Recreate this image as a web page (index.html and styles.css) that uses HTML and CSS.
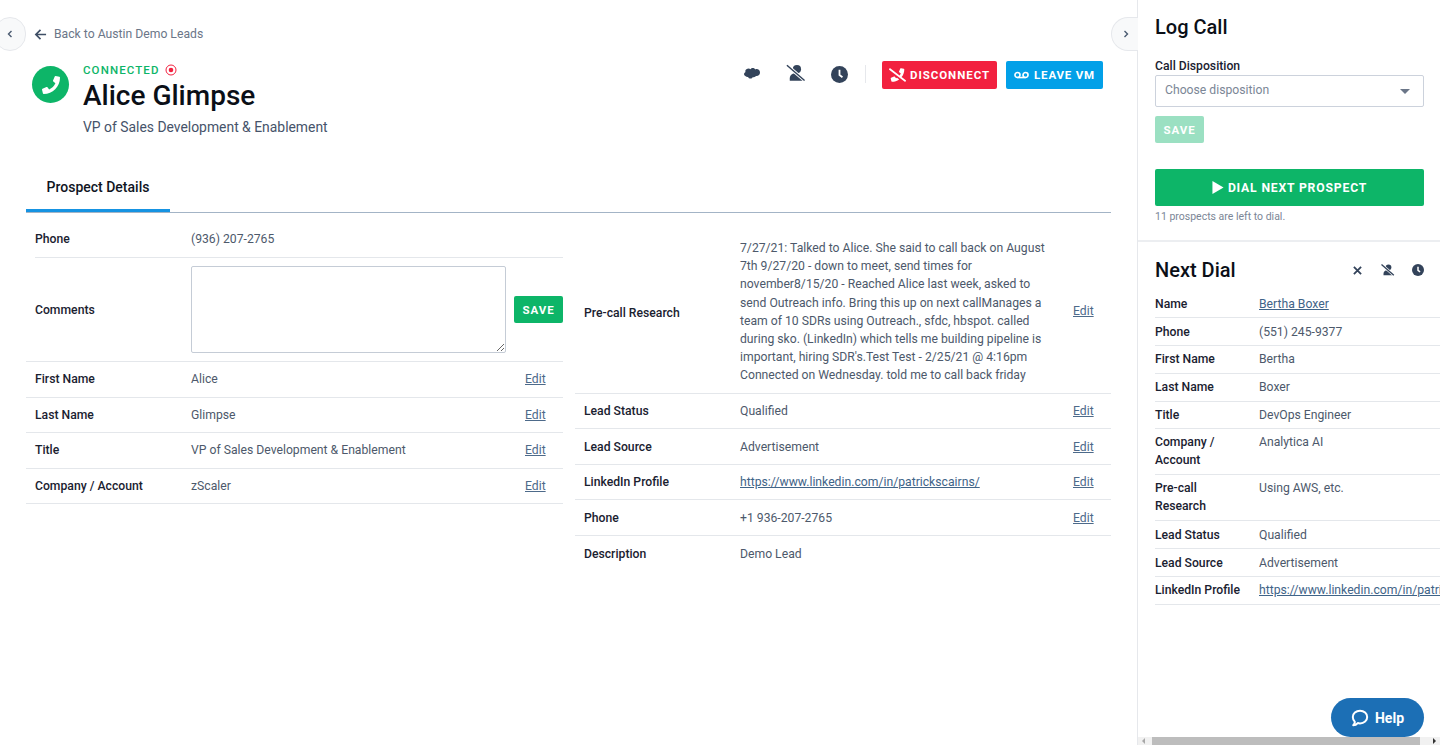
FILE: index.html
```html
<!DOCTYPE html>
<html lang="en">
<head>
<meta charset="utf-8">
<title>Alice Glimpse</title>
<link rel="stylesheet" href="styles.css">
</head>
<body>
<div class="app">
  <main class="main">
    <button class="toggle toggle-left"><svg viewBox="0 0 10 10" width="10" height="10"><path d="M6.5 2 3.5 5l3 3" fill="none" stroke="#4a5a70" stroke-width="1.4"/></svg></button>
    <button class="toggle toggle-right"><svg viewBox="0 0 10 10" width="10" height="10"><path d="M3.5 2l3 3-3 3" fill="none" stroke="#4a5a70" stroke-width="1.4"/></svg></button>
    <a class="back"><svg viewBox="0 0 14 14" width="13" height="13"><path d="M13 7H2.5M7 2 2 7l5 5" fill="none" stroke="#3f4f66" stroke-width="1.8"/></svg><span>Back to Austin Demo Leads</span></a>
    <header class="head">
      <div class="who">
        <span class="avatar"><svg viewBox="0 0 512 512" width="18" height="18"><path fill="#fff" d="M493.4 24.6l-104-24c-11.3-2.6-22.9 3.3-27.5 13.9l-48 112c-4.2 9.8-1.4 21.3 6.9 28l60.6 49.6c-36 76.7-98.9 140.5-177.2 177.2l-49.6-60.6c-6.8-8.3-18.2-11.1-28-6.9l-112 48C3.9 366.5-2 378.1.6 389.4l24 104C27.1 504.2 36.7 512 48 512c256.1 0 464-207.5 464-464 0-11.2-7.7-20.9-18.6-23.4z"/></svg></span>
        <div class="who-text">
          <div class="status">CONNECTED <svg viewBox="0 0 12 12" width="12" height="12"><circle cx="6" cy="6" r="5" fill="none" stroke="#f2213f" stroke-width="1"/><circle cx="6" cy="6" r="2.3" fill="#f2213f"/></svg></div>
          <h1>Alice Glimpse</h1>
          <div class="role">VP of Sales Development &amp; Enablement</div>
        </div>
      </div>
      <div class="actions">
        <svg class="cloud" viewBox="0 0 16 11" width="16" height="11"><path fill="#33435a" d="M6.5 1.2C7 .5 7.9 0 8.8 0c1.100 0 2 .6 2.500 1.400.4-.2.9-.3 1.300-.3C14.500 1.100 16 2.600 16 4.600s-1.500 3.500-3.400 3.500h-.7c-.4.700-1.200 1.200-2 1.200-.4 0-.8-.1-1.100-.3-.4 1-1.300 1.600-2.300 1.600-1.100 0-2-.7-2.400-1.600-.2 0-.3.100-.5.100C2.200 8.800 0 7.600 0 6.200c0-.9.700-1.800 1.500-2.200-.1-.3-.2-.6-.2-1C1.300 1.700 3.200.6 4.500.6c.8 0 1.500.2 2 .6z"/></svg>
        <svg class="ico-user" viewBox="0 0 22 18" width="21" height="18"><circle cx="12.5" cy="5" r="4.3" fill="#33435a"/><path fill="#33435a" d="M5 17v-2.500C5 11.500 7.500 9.500 10 9.500h1L19 15.800V17z"/><path d="M2 .8l18.500 16" stroke="#fff" stroke-width="3.400"/><path d="M2 .8l18.500 16" stroke="#33435a" stroke-width="1.500"/></svg>
        <svg class="ico-clock" viewBox="0 0 16 16" width="17" height="17"><circle cx="8" cy="8" r="8" fill="#33435a"/><path d="M8 3.500V8.500l2.800 2" fill="none" stroke="#fff" stroke-width="1.700"/></svg>
        <span class="sep"></span>
        <button class="btn btn-red"><svg viewBox="0 0 640 512" width="17" height="14"><path fill="#fff" d="M268.200 381.400l-49.600-60.600c-6.800-8.300-18.200-11.100-28-6.900l-112 48c-10.700 4.600-16.500 16.100-13.900 27.500l24 104c2.500 10.800 12.100 18.600 23.400 18.600 100.700 0 193.700-32.400 269.700-86.900l-80-61.800c-10.900 6.900-21.600 13.200-33.600 17.900zm365.600 76.700L475.100 335.500C537.900 256.500 576 156.900 576 48c0-11.200-7.700-20.900-18.600-23.400l-104-24c-11.300-2.600-22.900 3.300-27.500 13.900l-48 112c-4.200 9.800-1.400 21.300 6.900 28l60.600 49.600c-12.200 26.100-27.900 50.300-46 72.800L45.500 3.400C38.500-2 28.500-.8 23 6.200L3.400 31.500c-5.400 7-4.200 17 2.800 22.400l588.400 454.700c7 5.400 17 4.200 22.500-2.800l19.600-25.300c5.400-6.800 4.100-16.900-2.900-22.300z"/></svg>DISCONNECT</button>
        <button class="btn btn-blue"><svg viewBox="0 0 16 8" width="15" height="8"><circle cx="3.700" cy="4" r="2.700" fill="none" stroke="#fff" stroke-width="1.700"/><circle cx="12.300" cy="4" r="2.700" fill="none" stroke="#fff" stroke-width="1.700"/><path d="M3.700 6.700h8.600" stroke="#fff" stroke-width="1.700"/></svg>LEAVE VM</button>
      </div>
    </header>
    <nav class="tabs"><a class="tab">Prospect Details</a></nav>
    <section class="details">
      <div class="col">
        <div class="row row-inset row-phone"><span class="k">Phone</span><span class="v">(936) 207-2765</span></div>
        <div class="row row-comments"><span class="k">Comments</span><textarea class="comment" aria-label="Comments"></textarea><button class="btn btn-green">SAVE</button></div>
        <div class="row"><span class="k">First Name</span><span class="v">Alice</span><a class="edit">Edit</a></div>
        <div class="row"><span class="k">Last Name</span><span class="v">Glimpse</span><a class="edit">Edit</a></div>
        <div class="row"><span class="k">Title</span><span class="v">VP of Sales Development &amp; Enablement</span><a class="edit">Edit</a></div>
        <div class="row"><span class="k">Company / Account</span><span class="v">zScaler</span><a class="edit">Edit</a></div>
      </div>
      <div class="col col-right">
        <div class="row row-research"><span class="k">Pre-call Research</span><span class="v">7/27/21: Talked to Alice. She said to call back on August 7th 9/27/20 - down to meet, send times for november8/15/20 - Reached Alice last week, asked to send Outreach info. Bring this up on next callManages a team of 10 SDRs using Outreach., sfdc, hbspot. called during sko. (LinkedIn) which tells me building pipeline is important, hiring SDR's.Test Test - 2/25/21 @ 4:16pm Connected on Wednesday. told me to call back friday</span><a class="edit">Edit</a></div>
        <div class="row"><span class="k">Lead Status</span><span class="v">Qualified</span><a class="edit">Edit</a></div>
        <div class="row"><span class="k">Lead Source</span><span class="v">Advertisement</span><a class="edit">Edit</a></div>
        <div class="row"><span class="k">LinkedIn Profile</span><span class="v"><a class="link">https://www.linkedin.com/in/patrickscairns/</a></span><a class="edit">Edit</a></div>
        <div class="row"><span class="k">Phone</span><span class="v">+1 936-207-2765</span><a class="edit">Edit</a></div>
        <div class="row row-last"><span class="k">Description</span><span class="v">Demo Lead</span></div>
      </div>
    </section>
  </main>
  <aside class="side">
    <section class="log">
      <h2>Log Call</h2>
      <label class="field-label">Call Disposition</label>
      <div class="select"><span class="placeholder">Choose disposition</span><i class="caret"></i></div>
      <button class="btn btn-save">SAVE</button>
      <button class="btn btn-dial"><svg viewBox="0 0 12 14" width="12" height="13"><path d="M0 0l12 7-12 7z" fill="#fff"/></svg>DIAL NEXT PROSPECT</button>
      <p class="left">11 prospects are left to dial.</p>
    </section>
    <section class="next">
      <div class="next-head">
        <h2>Next Dial</h2>
        <div class="next-icons">
          <svg viewBox="0 0 10 10" width="9" height="9"><path d="M1 1l8 8M9 1 1 9" stroke="#33435a" stroke-width="2"/></svg>
          <svg viewBox="0 0 22 18" width="15" height="12"><circle cx="12.5" cy="5" r="4.3" fill="#33435a"/><path fill="#33435a" d="M5 17v-2.500C5 11.500 7.500 9.500 10 9.500h1L19 15.800V17z"/><path d="M2 .8l18.500 16" stroke="#fff" stroke-width="4"/><path d="M2 .8l18.500 16" stroke="#33435a" stroke-width="2"/></svg>
          <svg viewBox="0 0 16 16" width="12" height="12"><circle cx="8" cy="8" r="8" fill="#33435a"/><path d="M8 3.500V8.500l2.800 2" fill="none" stroke="#fff" stroke-width="2"/></svg>
        </div>
      </div>
      <div class="srow"><span class="sk">Name</span><span class="sv"><a class="link">Bertha Boxer</a></span></div>
      <div class="srow"><span class="sk">Phone</span><span class="sv">(551) 245-9377</span></div>
      <div class="srow"><span class="sk">First Name</span><span class="sv">Bertha</span></div>
      <div class="srow"><span class="sk">Last Name</span><span class="sv">Boxer</span></div>
      <div class="srow"><span class="sk">Title</span><span class="sv">DevOps Engineer</span></div>
      <div class="srow srow-tall"><span class="sk">Company / Account</span><span class="sv">Analytica AI</span></div>
      <div class="srow srow-tall"><span class="sk">Pre-call Research</span><span class="sv">Using AWS, etc.</span></div>
      <div class="srow"><span class="sk">Lead Status</span><span class="sv">Qualified</span></div>
      <div class="srow"><span class="sk">Lead Source</span><span class="sv">Advertisement</span></div>
      <div class="srow"><span class="sk">LinkedIn Profile</span><span class="sv"><a class="link">https://www.linkedin.com/in/patrickscairns/</a></span></div>
    </section>
    <div class="scrollbar">
      <i class="arr arr-l"></i><i class="thumb"></i><i class="arr arr-r"></i>
    </div>
  </aside>
</div>
<button class="help"><svg viewBox="0 0 20 20" width="18" height="18"><path d="M10 2c4.500 0 8 3 8 7s-3.500 7-8 7c-.9 0-1.700-.1-2.500-.4C6.500 16.800 4.800 18 2.500 18c1-1 1.700-2.300 1.800-3.700C2.900 13 2 11.100 2 9c0-4 3.500-7 8-7z" fill="none" stroke="#fff" stroke-width="2.200" stroke-linejoin="round"/></svg>Help</button>
</body>
</html>
```
FILE: styles.css
```css
* { box-sizing: border-box; }
html, body { margin: 0; height: 745px; overflow: hidden; }
body { font-family: Roboto, "Liberation Sans", sans-serif; font-size: 12.2px; color: #4a5568; background: #fff; }
button { font-family: inherit; border: 0; padding: 0; }
h1, h2, p { margin: 0; }
.app { display: flex; height: 745px; }
.main { position: relative; width: 1138px; flex: none; padding: 26px 26px 0; border-right: 1px solid #e6e8ec; }
.toggle { position: absolute; top: 17px; width: 32px; height: 34px; border: 1px solid #e6e8ec; background: #f8f9fa; border-radius: 17px; display: flex; align-items: center; }
.toggle-left { left: -6px; padding-left: 10px; }
.toggle-right { right: -1px; width: 27px; border-right: 0; border-radius: 17px 0 0 17px; padding-left: 9px; }
.back { display: flex; align-items: center; gap: 7px; padding-left: 8px; height: 16px; color: #6b7688; }
.head { display: flex; justify-content: space-between; margin-top: 20px; padding: 0 8px 0 6px; height: 90px; }
.who { display: flex; gap: 14px; }
.avatar { width: 37px; height: 37px; margin-top: 4px; border-radius: 50%; background: #0db568; display: flex; align-items: center; justify-content: center; }
.status { display: flex; align-items: center; gap: 5px; height: 16px; color: #0db568; font-size: 11.5px; font-weight: 500; letter-spacing: 1.1px; }
.who h1 { font-size: 28px; line-height: 34px; font-weight: 500; color: #0b0f17; margin-top: 1px; }
.role { font-size: 13.9px; line-height: 20px; color: #46536a; margin-top: 4px; }
.actions { display: flex; align-items: flex-start; margin-top: -1px; }
.cloud { margin: 7px 25px 0 0; }
.ico-user { margin: 3px 25px 0 0; }
.ico-clock { margin: 5px 17px 0 0; }
.sep { width: 1px; height: 18px; margin: 4px 16px 0 0; background: #e6e8ec; }
.btn { display: inline-flex; align-items: center; justify-content: center; border-radius: 2px; color: #fff; font-size: 11.5px; font-weight: 700; letter-spacing: .95px; }
.btn-red { width: 115px; height: 28px; gap: 4px; background: #f2213f; margin-right: 9px; }
.btn-blue { width: 97px; height: 28px; gap: 5px; background: #02a0e8; letter-spacing: .8px; }
.tabs { height: 54px; margin-top: 7px; border-bottom: 1px solid #a3b4c6; }
.tab { display: flex; align-items: center; justify-content: center; width: 144px; height: 53px; padding-top: 6px; border-bottom: 3px solid #1693e2; color: #10151f; font-size: 14px; font-weight: 500; }
.details { display: flex; gap: 12px; }
.col { width: 537px; flex: none; padding-top: 8px; }
.col-right { width: 536px; padding-top: 17px; }
.row { display: flex; align-items: center; min-height: 35.6px; padding-left: 9px; border-bottom: 1px solid #e4e7eb; }
.row-phone { margin-left: 9px; padding-left: 0; height: 37px; }
.k { width: 156px; flex: none; font-weight: 500; color: #1a2130; }
.v { flex: 1; color: #4d596b; }
.edit { width: 38px; flex: none; color: #4d6a8a; text-decoration: underline; }
.col-right .v { padding-right: 20px; }
.row-comments { height: 104px; }
.comment { width: 315px; height: 87px; margin: 0 8px 0 0; resize: both; border: 1px solid #c5ccd6; border-radius: 2px; background: #fff; }
.btn-green { width: 49px; height: 27px; background: #0db568; }
.row-research { padding-top: 9px; padding-bottom: 8px; }
.row-research .v { line-height: 18.2px; }
.row-research .k { padding-top: 2px; }
.row-research .edit { height: 17px; margin-top: 1px; }
.row-last { border-bottom: 0; }
.side { position: relative; width: 302px; flex: none; overflow: hidden; }
.log { height: 242px; padding: 15px 15px 0 17px; border-bottom: 2px solid #eceef1; }
.side h2 { font-size: 20px; line-height: 24px; font-weight: 500; color: #0b0f17; }
.field-label { display: block; margin-top: 18.5px; font-weight: 500; color: #1a2130; line-height: 16px; }
.select { display: flex; justify-content: space-between; align-items: center; width: 269px; height: 32px; padding: 0 13px 0 9px; margin-top: 1.5px; border: 1px solid #ccd2dc; border-radius: 2px; color: #7b8696; }
.placeholder { position: relative; top: -1px; }
.caret { width: 0; height: 0; border: 5px solid transparent; border-top-color: #6b7688; border-bottom: 0; }
.btn-save { display: flex; width: 49px; height: 27px; margin-top: 9px; background: #9be0c2; }
.btn-dial { display: flex; width: 269px; height: 37px; gap: 4px; margin-top: 26px; background: #0db568; font-size: 12.2px; letter-spacing: .82px; }
.left { margin-top: 4px; font-size: 10.5px; line-height: 14px; color: #7b8696; }
.next { padding: 15px 0 0 17px; width: 400px; }
.next-head { display: flex; justify-content: space-between; align-items: center; width: 269px; height: 26px; margin-bottom: 7.5px; }
.next-icons { display: flex; align-items: center; gap: 17.5px; }
.srow { display: flex; align-items: center; min-height: 27.8px; border-bottom: 1px solid #e4e7eb; }
.srow-tall { align-items: flex-start; line-height: 18px; padding: 4px 0 5px; }
.sk { width: 104px; flex: none; padding-right: 14px; font-weight: 500; color: #1a2130; }
.sv { color: #4d596b; white-space: nowrap; }
.link { color: #3f6488; text-decoration: underline; }
.scrollbar { position: absolute; left: 0; right: 0; bottom: 0; height: 8px; background: #f1f1f1; display: flex; align-items: center; padding: 0 4px; }
.thumb { width: 268px; height: 8px; background: #bdbdbd; margin: 0 13px 0 7px; }
.arr { width: 0; height: 0; border: 3px solid transparent; }
.arr-l { border-right-color: #a8a8a8; border-left: 0; }
.arr-r { border-left-color: #333; border-right: 0; }
.help { position: absolute; left: 1331px; top: 698px; width: 93px; height: 39px; display: flex; align-items: center; justify-content: center; gap: 6px; border-radius: 20px; background: #1c6fb5; color: #fff; font-size: 14px; font-weight: 700; }
```
